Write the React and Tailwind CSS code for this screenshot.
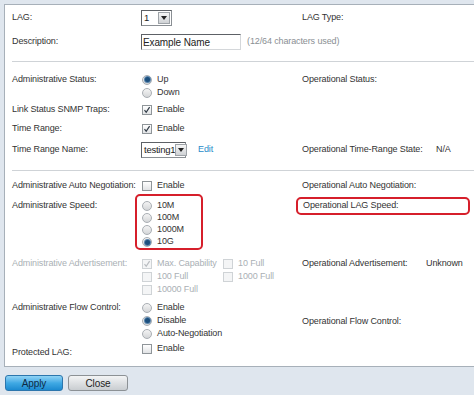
import React from 'react'

const Radio = ({ checked }) => (
  <span className="inline-flex w-[10px] h-[10px] rounded-full border border-[#a9aeb3] bg-gradient-to-b from-[#f4f4f4] to-[#d4d6d8] items-center justify-center shrink-0">
    {checked && <span className="w-[5px] h-[5px] rounded-full bg-[#1c4f7e] ring-1 ring-[#5b86ad]" />}
  </span>
)

const Check = ({ checked, disabled }) => (
  <span
    className={
      disabled
        ? 'inline-flex w-[10px] h-[10px] border border-[#cfd3d6] bg-[#f4f5f6] items-center justify-center shrink-0'
        : 'inline-flex w-[10px] h-[10px] border border-[#8f9599] bg-gradient-to-b from-white to-[#e1e3e5] items-center justify-center shrink-0'
    }
  >
    {checked && (
      <svg width="8" height="8" viewBox="0 0 8 8">
        <path d="M1.5 4.2 L3.2 6.3 L6.6 1.2" fill="none" stroke={disabled ? '#b8bcc0' : '#2f3a45'} strokeWidth="1.2" />
      </svg>
    )}
  </span>
)

const Opt = ({ children, h = 'h-[13px]', disabled }) => (
  <div className={`flex items-center gap-[5px] whitespace-nowrap ${h} ${disabled ? 'text-[#aab0b5]' : ''}`}>{children}</div>
)

const Select = ({ value, w }) => (
  <div className={`flex items-center h-[16px] ${w} border border-[#8a8f94] border-t-[#5d6166] border-l-[#5d6166] bg-white pl-[2px] pr-[1px]`}>
    <span className="flex-1 text-[9.5px] tracking-[-0.25px] text-[#222] whitespace-nowrap">{value}</span>
    <span className="w-[12px] h-[12px] shrink-0 border border-[#9ea3a8] bg-gradient-to-b from-[#f6f6f6] to-[#cfd2d5] flex items-center justify-center">
      <svg width="6" height="4" viewBox="0 0 6 4"><path d="M0 0 H6 L3 4 Z" fill="#222" /></svg>
    </span>
  </div>
)

const Label = ({ children, className = '' }) => (
  <div className={`w-[129px] shrink-0 whitespace-nowrap ${className}`}>{children}</div>
)

const Ctrl = ({ children, className = '' }) => (
  <div className={`w-[161px] shrink-0 ${className}`}>{children}</div>
)

const Divider = ({ className }) => <div className={`h-px bg-[#cfd3d7] ${className}`} />

export default function App() {
  return (
    <div className="w-[474px] h-[395px] overflow-hidden bg-[#dfe6ee] font-['Liberation_Sans',Arial,sans-serif] text-[9px] tracking-[-0.12px] text-[#333]">
      <div className="ml-[4px] mt-[4px] h-[363px] bg-white border border-r-0 border-[#a7b0b9] pl-[7px] flex flex-col">
        {/* LAG */}
        <div className="flex items-center h-[16px] mt-[5px]">
          <Label>LAG:</Label>
          <Ctrl><Select value="1" w="w-[31px]" /></Ctrl>
          <div>LAG Type:</div>
        </div>
        <div className="flex items-center h-[16px] mt-[8px]">
          <Label>Description:</Label>
          <div className="w-[100px] h-[16px] border border-[#d4d7da] border-t-[#5d6166] border-l-[#5d6166] pl-[1px] flex items-center text-[10px] text-[#222]">
            Example Name
          </div>
          <div className="ml-[6px] text-[#8a8f94] whitespace-nowrap">(12/64 characters used)</div>
        </div>
        <Divider className="mt-[11px]" />

        {/* status */}
        <div className="flex mt-[11px]">
          <Label className="h-[13px] flex items-center">Administrative Status:</Label>
          <Ctrl className="pl-[1px]">
            <Opt><Radio checked />Up</Opt>
            <Opt><Radio />Down</Opt>
          </Ctrl>
          <div className="h-[13px] flex items-center">Operational Status:</div>
        </div>
        <div className="flex items-center h-[14px] mt-[4px]">
          <Label>Link Status SNMP Traps:</Label>
          <Ctrl className="pl-[1px]"><Opt h="h-[14px]"><Check checked />Enable</Opt></Ctrl>
        </div>
        <div className="flex items-center h-[14px] mt-[5px]">
          <Label>Time Range:</Label>
          <Ctrl className="pl-[1px]"><Opt h="h-[14px]"><Check checked />Enable</Opt></Ctrl>
        </div>
        <div className="flex items-center h-[16px] mt-[6px]">
          <Label>Time Range Name:</Label>
          <Ctrl className="flex items-center">
            <Select value="testing1" w="w-[45px]" />
            <span className="ml-[12px] text-[#2a8bc9]">Edit</span>
          </Ctrl>
          <div className="w-[134px] whitespace-nowrap">Operational Time-Range State:</div>
          <div>N/A</div>
        </div>
        <Divider className="mt-[12px]" />

        {/* speed */}
        <div className="flex items-center h-[14px] mt-[8px]">
          <Label>Administrative Auto Negotiation:</Label>
          <Ctrl className="pl-[1px]"><Opt h="h-[14px]"><Check />Enable</Opt></Ctrl>
          <div className="whitespace-nowrap">Operational Auto Negotiation:</div>
        </div>
        <div className="flex mt-[7px]">
          <Label className="h-[12px] flex items-center">Administrative Speed:</Label>
          <Ctrl>
            <div className="-ml-[6px] -mt-[6px] w-[68px] border-2 border-[#d61f2b] rounded-[5px] pl-[5px] pt-[4px]">
              <Opt h="h-[12px]"><Radio />10M</Opt>
              <Opt h="h-[12px]"><Radio />100M</Opt>
              <Opt h="h-[12px]"><Radio />1000M</Opt>
              <Opt h="h-[12px]"><Radio checked />10G</Opt>
            </div>
          </Ctrl>
          <div className="-ml-[6px] -mt-[3px] w-[174px] h-[18px] border-2 border-[#d61f2b] rounded-[5px] pl-[5px] flex items-center self-start whitespace-nowrap">
            Operational LAG Speed:
          </div>
        </div>

        {/* advertisement */}
        <div className="flex mt-[7px]">
          <Label className="h-[13px] flex items-center text-[#aab0b5]">Administrative Advertisement:</Label>
          <Ctrl className="pl-[1px] grid grid-cols-[81px_1fr]">
            <Opt disabled><Check checked disabled />Max. Capability</Opt>
            <Opt disabled><Check disabled />10 Full</Opt>
            <Opt disabled><Check disabled />100 Full</Opt>
            <Opt disabled><Check disabled />1000 Full</Opt>
            <Opt disabled><Check disabled />10000 Full</Opt>
          </Ctrl>
          <div className="h-[13px] flex items-center whitespace-nowrap">
            <span className="w-[124px]">Operational Advertisement:</span>
            <span>Unknown</span>
          </div>
        </div>

        {/* flow control */}
        <div className="flex mt-[5px]">
          <Label className="h-[13px] flex items-center">Administrative Flow Control:</Label>
          <Ctrl className="pl-[1px]">
            <Opt><Radio />Enable</Opt>
            <Opt><Radio checked />Disable</Opt>
            <Opt><Radio />Auto-Negotiation</Opt>
          </Ctrl>
          <div className="mt-[14px] h-[13px] flex items-center whitespace-nowrap">Operational Flow Control:</div>
        </div>
        <div className="flex mt-[2px]">
          <Label className="h-[13px] mt-[4px] flex items-center">Protected LAG:</Label>
          <Ctrl className="pl-[1px]"><Opt><Check />Enable</Opt></Ctrl>
        </div>
      </div>

      <div className="flex gap-[5px] ml-[5px] mt-[8px]">
        <button className="w-[58px] h-[16px] rounded-[3px] border border-[#2c76ad] bg-gradient-to-b from-[#8fd3f5] via-[#3fa9e4] to-[#1b8ad0] text-[10px] text-[#0f2a44] font-['Liberation_Sans',Arial,sans-serif] flex items-center justify-center">
          Apply
        </button>
        <button className="w-[60px] h-[16px] rounded-[3px] border border-[#8c9195] bg-gradient-to-b from-[#f3f4f5] to-[#c9cdd1] text-[10px] text-[#222] font-['Liberation_Sans',Arial,sans-serif] flex items-center justify-center">
          Close
        </button>
      </div>
    </div>
  )
}
